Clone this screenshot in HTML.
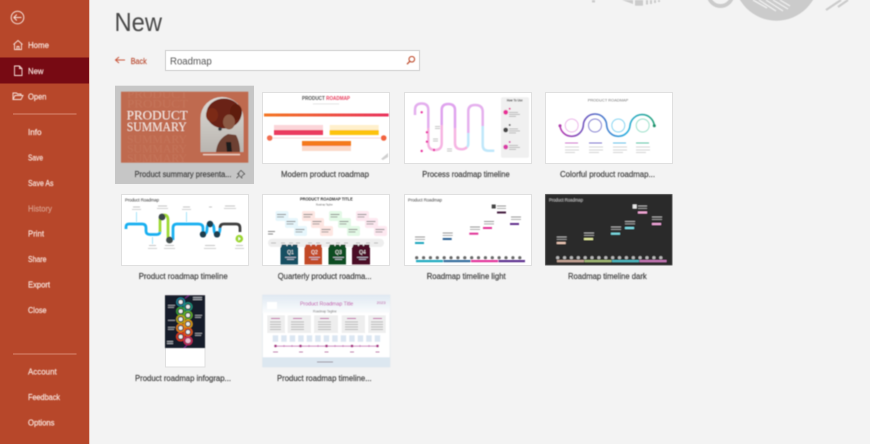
<!DOCTYPE html>
<html>
<head>
<meta charset="utf-8">
<style>
html,body{margin:0;padding:0;width:870px;height:444px;overflow:hidden;background:#f3f3f3}
svg{display:block;position:absolute;left:0;top:0;font-family:"Liberation Sans",sans-serif}
.nav{font-size:8.6px;fill:#f9e6df;stroke:#f9e6df;stroke-width:.18px}
.lb{font-size:8.6px;fill:#444;stroke:#444;stroke-width:.2px}
</style>
</head>
<body>
<svg width="870" height="444" viewBox="0 0 870 444" xmlns="http://www.w3.org/2000/svg">
<defs>
<filter id="b" x="-5%" y="-5%" width="110%" height="110%"><feGaussianBlur stdDeviation=".45"/></filter>
<filter id="b2" x="-5%" y="-5%" width="110%" height="110%"><feGaussianBlur stdDeviation=".55"/></filter>
<clipPath id="c1"><rect x="121" y="91.700" width="127.300" height="71"/></clipPath>
<linearGradient id="g2"><stop offset="0" stop-color="#f47521"/><stop offset="1" stop-color="#e8315c"/></linearGradient>
<linearGradient id="g4"><stop offset="0" stop-color="#b53bb2"/><stop offset=".35" stop-color="#5a63c4"/><stop offset=".7" stop-color="#2eaee0"/><stop offset="1" stop-color="#25a27c"/></linearGradient>
<linearGradient id="g10" x1="0" y1="0" x2="0" y2="1"><stop offset="0" stop-color="#dfe9f2"/><stop offset="1" stop-color="#fbfcfd"/></linearGradient>
<linearGradient id="arch" x1="0" y1="0" x2="0" y2="1"><stop offset="0" stop-color="#dcd9d4"/><stop offset="1" stop-color="#b9b5b0"/></linearGradient>
</defs>
<rect width="870" height="444" fill="#f3f3f3"/>

<!-- decorative top right -->
<g fill="#cbcbcb" filter="url(#b)">
<circle cx="776.500" cy="-21.800" r="42.500"/>
<g stroke="#f0f0f0" stroke-width="1.300" fill="none"><path d="M753 0l14 8M759 0l17 11M766 0l17 11M773 0l15 9M780 0l10 6"/></g>
<circle cx="720.500" cy="-6" r="12" fill="none" stroke="#cbcbcb" stroke-width="4"/>
<path d="M622 0L633 4V0Z"/>
<rect x="635" y="0" width="8" height="5.700"/>
<path d="M646 0h2v4.500h-2zM650 0h2v4h-2zM654 0h2v3h-2zM658 0h2v2h-2z"/>
<path d="M592 0h3v2.500h-3z"/>
<path d="M826 10L841 0M838 7L848 0" stroke="#cbcbcb" stroke-width="2.200" fill="none"/>
</g>

<!-- sidebar -->
<rect x="0" y="0" width="89" height="444" fill="#b7472a"/>
<rect x="89" y="0" width="1" height="444" fill="#e8c5ba"/>
<rect x="0" y="57.500" width="89" height="26" fill="#770a13"/>
<g filter="url(#b)">
<circle cx="17.500" cy="17.500" r="6.300" fill="none" stroke="#f7e3dc" stroke-width="1"/>
<path d="M21.500 17.500H14M16.800 14.500L13.800 17.500L16.800 20.500" fill="none" stroke="#f7e3dc" stroke-width="1"/>
<path d="M13.500 44.500L18 40.500L22.500 44.500M14.500 44V49.500H21.500V44M17 49.500V46.500H19V49.500" fill="none" stroke="#f7e3dc" stroke-width=".9"/>
<path d="M14.500 66H19.500L22 68.500V75.500H14.500ZM19.500 66V68.500H22" fill="none" stroke="#f7e3dc" stroke-width=".9"/>
<path d="M13 99.500V93H16.500L17.500 94H21V95.500M13 99.500L15 95.500H23L21 99.500Z" fill="none" stroke="#f7e3dc" stroke-width=".9"/>
<text class="nav" x="28" y="48" textLength="21" lengthAdjust="spacingAndGlyphs">Home</text>
<text class="nav" x="28" y="74" textLength="15.500" lengthAdjust="spacingAndGlyphs">New</text>
<text class="nav" x="28" y="99.500" textLength="18.500" lengthAdjust="spacingAndGlyphs">Open</text>
<text class="nav" x="28" y="135" textLength="13.500" lengthAdjust="spacingAndGlyphs">Info</text>
<text class="nav" x="28" y="160.500" textLength="15" lengthAdjust="spacingAndGlyphs">Save</text>
<text class="nav" x="28" y="186" textLength="25.500" lengthAdjust="spacingAndGlyphs">Save As</text>
<text class="nav" x="28" y="211.500" textLength="24" lengthAdjust="spacingAndGlyphs" style="fill:#d9a08e;stroke:#d9a08e">History</text>
<text class="nav" x="28" y="236.500" textLength="16" lengthAdjust="spacingAndGlyphs">Print</text>
<text class="nav" x="28" y="262" textLength="18.500" lengthAdjust="spacingAndGlyphs">Share</text>
<text class="nav" x="28" y="287.500" textLength="22" lengthAdjust="spacingAndGlyphs">Export</text>
<text class="nav" x="28" y="313" textLength="18.500" lengthAdjust="spacingAndGlyphs">Close</text>
<text class="nav" x="28" y="374.500" textLength="28.700" lengthAdjust="spacingAndGlyphs">Account</text>
<text class="nav" x="28" y="400" textLength="32" lengthAdjust="spacingAndGlyphs">Feedback</text>
<text class="nav" x="28" y="425.500" textLength="26.500" lengthAdjust="spacingAndGlyphs">Options</text>
</g>
<rect x="13" y="113.500" width="63.500" height="1" fill="#d98a72"/>
<rect x="13" y="353.500" width="63.500" height="1" fill="#d98a72"/>

<!-- header -->
<g filter="url(#b)">
<text x="114.500" y="31" font-size="26" fill="#4a4a4a" textLength="47.500" lengthAdjust="spacingAndGlyphs">New</text>
<path d="M125 60H116M119 57L115.500 60L119 63" fill="none" stroke="#c9573c" stroke-width="1"/>
<text x="130.700" y="64" font-size="8.400" fill="#bb5138" stroke="#bb5138" stroke-width=".2" textLength="16" lengthAdjust="spacingAndGlyphs">Back</text>
</g>
<rect x="165.500" y="50.500" width="254" height="20" fill="#fff" stroke="#d8d8d8" stroke-width="1.300"/>
<g filter="url(#b)">
<text x="170" y="64.300" font-size="9.700" fill="#555" textLength="41.700" lengthAdjust="spacingAndGlyphs">Roadmap</text>
<circle cx="411.800" cy="59.200" r="2.800" fill="none" stroke="#bf4f30" stroke-width="1.100"/>
<path d="M409.700 61.400L407 64.200" stroke="#bf4f30" stroke-width="1.300"/>
</g>

<!-- selected card -->
<rect x="115" y="85.700" width="139" height="98.300" fill="#c6c6c6"/>

<!-- white/thumb frames -->
<g fill="#fff" stroke="#dfdfdf" stroke-width="1">
<rect x="262.500" y="92.500" width="127" height="71"/>
<rect x="404.500" y="92.500" width="127" height="71"/>
<rect x="545.500" y="92.500" width="127" height="71"/>
<rect x="121.500" y="194.500" width="127" height="71"/>
<rect x="262.500" y="194.500" width="127" height="71"/>
<rect x="404.500" y="194.500" width="127" height="71"/>
<rect x="165.500" y="295.500" width="39.500" height="71.500"/>
</g>

<!-- thumb 1: product summary -->
<g filter="url(#b)">
<rect x="121" y="91.700" width="127.300" height="71" fill="#bf6a4f"/>
<g clip-path="url(#c1)">
<g font-family="Liberation Serif,serif" font-size="12" fill="#c5745a">
<text x="127" y="98" textLength="61" lengthAdjust="spacingAndGlyphs">PRODUCT</text>
<text x="127" y="107.500" textLength="61" lengthAdjust="spacingAndGlyphs">PRODUCT</text>
<text x="127" y="143" textLength="60" lengthAdjust="spacingAndGlyphs">SUMMARY</text>
<text x="127" y="152.500" textLength="60" lengthAdjust="spacingAndGlyphs">SUMMARY</text>
<text x="127" y="162" textLength="60" lengthAdjust="spacingAndGlyphs">SUMMARY</text>
</g>
</g>
<text x="126.700" y="119.300" font-family="Liberation Serif,serif" font-size="12.300" fill="#f6e9e2" textLength="61" lengthAdjust="spacingAndGlyphs">PRODUCT</text>
<text x="126.700" y="131" font-family="Liberation Serif,serif" font-size="12.300" fill="#f6e9e2" textLength="60" lengthAdjust="spacingAndGlyphs">SUMMARY</text>
<path d="M200.500 152V118A21.500 21 0 0 1 243.500 118V152Z" fill="url(#arch)"/>
<path d="M216 152C217 142 222 137 228 134L236 135C239 140 240 147 240 152Z" fill="#6d4030"/>
<ellipse cx="224" cy="113.500" rx="17.500" ry="15" fill="#6a2412"/>
<ellipse cx="212" cy="115" rx="6" ry="7" fill="#7c2b14"/>
<ellipse cx="236" cy="112" rx="6" ry="8" fill="#5e1e0e"/>
<ellipse cx="229" cy="122" rx="6" ry="7.500" fill="#8c5a45"/>
<path d="M226 142l5 0 1 10h-5z" fill="#1d1b1c"/>
<circle cx="220" cy="129" r="1.800" fill="#38383c"/>
<rect x="203" y="154" width="37" height="1.200" fill="#f1d8cc"/>
</g>
<text class="lb" x="134.500" y="177" textLength="97" lengthAdjust="spacingAndGlyphs" filter="url(#b)">Product summary presenta...</text>
<path d="M238 173.500l3-3.200 3.800 3.800-1.100 .3-2 2 .1 1.600-4-4 1.500 .1zM238.800 175.800l-2.300 2.400" fill="none" stroke="#555" stroke-width=".8" filter="url(#b)"/>

<!-- thumb 2: modern -->
<g filter="url(#b)">
<text x="302" y="100" font-size="5.200" font-weight="bold" fill="#555" textLength="48" lengthAdjust="spacingAndGlyphs">PRODUCT <tspan fill="#e8415f">ROADMAP</tspan></text>
<rect x="313" y="103.500" width="26" height=".8" fill="#ddd"/>
<rect x="264" y="113.500" width="124.700" height="3" fill="url(#g2)"/>
<rect x="274" y="125" width="49" height="5" fill="#fbd5d9"/>
<rect x="274" y="130" width="49" height="5" fill="#ea3b5f"/>
<rect x="329.700" y="125" width="49" height="5" fill="#fff0cc"/>
<rect x="329.700" y="130" width="49" height="5" fill="#fdc30a"/>
<rect x="269" y="137.600" width="114" height=".9" fill="#fad8d8"/>
<circle cx="269.700" cy="138" r="2.800" fill="#f26d4f"/>
<circle cx="383.700" cy="138" r="2.800" fill="#f2623e"/>
<rect x="302" y="141" width="49" height="5" fill="#f47a1c"/>
<rect x="302" y="146" width="49" height="5" fill="#fbd9c9"/>
<path d="M381 159l7-6v4l-5 3z" fill="#cfcfcf"/>
</g>
<text class="lb" x="281" y="177" textLength="88" lengthAdjust="spacingAndGlyphs" filter="url(#b)">Modern product roadmap</text>

<!-- thumb 3: process -->
<g filter="url(#b)" fill="none">
<path d="M415 115V110Q415 103.500 421.700 103.500Q428.300 103.500 428.300 110V128" stroke="#e3aeee" stroke-width="2.500"/>
<path d="M428.300 128V143.300Q428.300 150 435 150Q441.700 150 441.700 143.300V125" stroke="#f6b4e2" stroke-width="2.500"/>
<path d="M441.700 125V110Q441.700 104 448.300 104Q455 104 455 110V128" stroke="#dfa3ee" stroke-width="2.500"/>
<path d="M455 128V143.300Q455 149.300 461.700 149.300Q465 149.300 467 147" stroke="#f6b4e2" stroke-width="2.500"/>
<path d="M467 147Q468.300 146 468.300 143.300V133" stroke="#bfe7fa" stroke-width="2.500"/>
<path d="M468.300 133V111Q468.300 105 475 105Q482.700 105 482.700 111.700V126" stroke="#e5b0ee" stroke-width="2.500"/>
<path d="M482.700 126V145Q482.700 150.700 488.300 150.700H494.300" stroke="#bfe7fa" stroke-width="2.500"/>
<g fill="#e7329e" stroke="none">
<circle cx="421.700" cy="112.300" r="1.200"/><circle cx="427" cy="132.300" r="1.200"/><circle cx="427" cy="141.700" r="1.200"/><circle cx="421.700" cy="151" r="1.200"/><circle cx="434" cy="150" r="1.200"/>
</g>
<g stroke="#b5b5b5" stroke-width=".7"><path d="M435 126.500h5M435 128.500h5M433 139h5M433 141h5M447 149h5M447 151h5"/></g>
<rect x="501" y="97.300" width="28" height="60.400" rx="2" fill="#f0f0f0" stroke="none"/>
<text x="506.700" y="101.500" font-size="3.200" font-weight="bold" fill="#444" stroke="none" textLength="16" lengthAdjust="spacingAndGlyphs">How To Use</text>
<g stroke="none">
<circle cx="505.700" cy="112.300" r="2.400" fill="#e72f98"/><circle cx="505.700" cy="130" r="2.400" fill="#444"/><circle cx="505.700" cy="147" r="2.400" fill="#d93aa8"/>
<circle cx="509.700" cy="108.700" r="1" fill="#e72f98"/><circle cx="509.700" cy="125" r="1" fill="#555"/><circle cx="509.700" cy="142" r="1" fill="#d93aa8"/>
<path d="M509 112h9v.8h-9zM509 114h11v.8h-11zM509 116h7v.8h-7zM509 128.500h9v.8h-9zM509 130.500h11v.8h-11zM509 132.500h7v.8h-7zM509 145h9v.8h-9zM509 147h11v.8h-11zM509 149h7v.8h-7z" fill="#a5a5a5"/>
</g>
</g>
<text class="lb" x="422.300" y="177" textLength="87.400" lengthAdjust="spacingAndGlyphs" filter="url(#b)">Process roadmap timeline</text>

<!-- thumb 4: colorful -->
<g filter="url(#b)" fill="none">
<text x="587.700" y="101.500" font-size="4" fill="#777" stroke="none" textLength="40.600" lengthAdjust="spacingAndGlyphs">PRODUCT ROADMAP</text>
<path d="M560 125.700A11.700 11.700 0 0 0 583.300 125.700A11.700 11.700 0 0 1 606.700 125.700A11.700 11.700 0 0 0 630 125.700A12.200 12.200 0 0 1 654.300 125.700" stroke="url(#g4)" stroke-width="1.600"/>
<circle cx="560" cy="125.700" r="1.500" fill="#ae3cab" stroke="none"/><circle cx="654.300" cy="125.700" r="1.500" fill="#1e8f69" stroke="none"/>
<circle cx="571.700" cy="125.500" r="6.500" stroke="#ecb8ea" stroke-width="1"/>
<circle cx="595" cy="125.500" r="6.500" stroke="#8a87d2" stroke-width="1"/>
<circle cx="618.300" cy="125.500" r="6.500" stroke="#8ad6f2" stroke-width="1"/>
<circle cx="642.700" cy="125.500" r="6.500" stroke="#9de0ca" stroke-width="1"/>
<g stroke="none">
<rect x="565" y="142.500" width="13" height="1" fill="#cf7acd"/><rect x="589" y="142.500" width="13" height="1" fill="#7f76cc"/><rect x="613" y="142.500" width="13" height="1" fill="#66c0e8"/><rect x="636" y="142.500" width="13" height="1" fill="#60c3a4"/>
<g fill="#d5d5d5"><rect x="565" y="146.500" width="14" height="1"/><rect x="565" y="149.500" width="14" height="1"/><rect x="565" y="152" width="10" height="1"/><rect x="589" y="146.500" width="14" height="1"/><rect x="589" y="149.500" width="14" height="1"/><rect x="589" y="152" width="10" height="1"/><rect x="613" y="146.500" width="14" height="1"/><rect x="613" y="149.500" width="14" height="1"/><rect x="613" y="152" width="10" height="1"/><rect x="636" y="146.500" width="14" height="1"/><rect x="636" y="149.500" width="14" height="1"/><rect x="636" y="152" width="10" height="1"/></g>
</g>
</g>
<text class="lb" x="560" y="177" textLength="95" lengthAdjust="spacingAndGlyphs" filter="url(#b)">Colorful product roadmap...</text>

<!-- thumb 5: timeline -->
<g filter="url(#b)" fill="none">
<text x="125" y="201.500" font-size="4.800" fill="#555" stroke="#555" stroke-width=".1" textLength="34" lengthAdjust="spacingAndGlyphs">Product Roadmap</text>
<g stroke="#8fdcf8" stroke-width=".8"><path d="M136.500 212V222M152.500 237V244M186.500 212V222"/></g>
<path d="M126 229V227Q126 224 129 224H142Q146 224 146 228V231Q146 234.500 150 234.500H157Q160 234.500 160 231" stroke="#14aef0" stroke-width="2.700"/>
<path d="M160 232V220Q160 215 164 215Q168 215 168 220V236Q168 240 169.500 240" stroke="#9dd832" stroke-width="2.700"/>
<path d="M173 240V228Q173 224 177 224H198Q203 224 203 228V234Q207 234 207 229Q207 224 210 224Q214 224 214 229Q214 234 217 234Q220 234 220 228" stroke="#14aef0" stroke-width="2.700"/>
<path d="M220 228Q220 224 224 224H236Q240 224 240 228V232" stroke="#3c3c3c" stroke-width="2.700"/>
<g stroke="none">
<circle cx="162" cy="217" r="3.400" fill="#3a4648"/><circle cx="169.500" cy="240" r="3.400" fill="#3f4b4b"/>
<circle cx="203" cy="234.300" r="3.200" fill="#1c3c4d"/><circle cx="210" cy="224" r="3.200" fill="#1c3c4d"/><circle cx="217" cy="234.300" r="3.200" fill="#1c3c4d"/>
<circle cx="239.300" cy="238.700" r="3.800" fill="#9bd62d"/>
<path d="M238.300 236.700l2.500 2-2.500 2z" fill="#fff"/>
<g fill="#c5c5c5">
<rect x="133" y="206.500" width="7" height="1"/><rect x="132" y="209" width="9" height=".8"/>
<rect x="158" y="205.500" width="9" height="1"/><rect x="157" y="208" width="11" height=".8"/>
<rect x="183" y="206.500" width="7" height="1"/><rect x="182" y="209" width="9" height=".8"/>
<rect x="209" y="206.500" width="3" height="1"/>
<rect x="225" y="205.500" width="10" height="1"/><rect x="224" y="208" width="12" height=".8"/>
<rect x="149" y="245" width="7" height="1"/><rect x="148" y="248" width="9" height=".8"/>
<rect x="165" y="245" width="9" height="1"/><rect x="164" y="248" width="11" height=".8"/>
<rect x="205" y="245" width="10" height="1"/><rect x="204" y="248" width="12" height=".8"/>
<rect x="236" y="245" width="7" height="1"/><rect x="235" y="248" width="9" height=".8"/>
</g>
</g>
</g>
<text class="lb" x="138.700" y="279" textLength="89" lengthAdjust="spacingAndGlyphs" filter="url(#b)">Product roadmap timeline</text>

<!-- thumb 6: quarterly -->
<g filter="url(#b)">
<text x="300" y="200.700" font-size="4.600" font-weight="bold" fill="#333" textLength="52.700" lengthAdjust="spacingAndGlyphs">PRODUCT ROADMAP TITLE</text>
<text x="316" y="205.500" font-size="3" fill="#666" textLength="16.700" lengthAdjust="spacingAndGlyphs">Roadmap Tagline</text>
<g fill="#e6f6fc">
<rect x="275.500" y="211" width="13" height="10" rx="2"/><rect x="285" y="218" width="13" height="10" rx="2"/><rect x="294" y="226" width="13" height="10" rx="2"/>
</g>
<g fill="#fde6e2">
<rect x="302" y="211" width="13" height="10" rx="2"/><rect x="311" y="218" width="13" height="10" rx="2"/><rect x="320" y="226" width="13" height="10" rx="2"/>
</g>
<g fill="#e3f9e6">
<rect x="329" y="211" width="13" height="10" rx="2"/><rect x="338" y="218" width="13" height="10" rx="2"/><rect x="347" y="226" width="13" height="10" rx="2"/>
</g>
<g fill="#fde8f0">
<rect x="356" y="211" width="13" height="10" rx="2"/><rect x="365" y="218" width="13" height="10" rx="2"/><rect x="374" y="226" width="13" height="10" rx="2"/>
</g>
<g fill="#888">
<rect x="277" y="214" width="9" height="1"/><rect x="277" y="216.500" width="7" height=".8"/><rect x="286.500" y="221" width="9" height="1"/><rect x="286.500" y="223.500" width="7" height=".8"/><rect x="295.500" y="229" width="9" height="1"/><rect x="295.500" y="231.500" width="7" height=".8"/>
<rect x="303.500" y="214" width="9" height="1"/><rect x="303.500" y="216.500" width="7" height=".8"/><rect x="312.500" y="221" width="9" height="1"/><rect x="312.500" y="223.500" width="7" height=".8"/><rect x="321.500" y="229" width="9" height="1"/><rect x="321.500" y="231.500" width="7" height=".8"/>
<rect x="330.500" y="214" width="9" height="1"/><rect x="330.500" y="216.500" width="7" height=".8"/><rect x="339.500" y="221" width="9" height="1"/><rect x="339.500" y="223.500" width="7" height=".8"/><rect x="348.500" y="229" width="9" height="1"/><rect x="348.500" y="231.500" width="7" height=".8"/>
<rect x="357.500" y="214" width="9" height="1"/><rect x="357.500" y="216.500" width="7" height=".8"/><rect x="366.500" y="221" width="9" height="1"/><rect x="366.500" y="223.500" width="7" height=".8"/><rect x="375.500" y="229" width="9" height="1"/><rect x="375.500" y="231.500" width="7" height=".8"/>
<rect x="268" y="231" width="7" height="1"/><rect x="268" y="233.500" width="5" height="1"/>
</g>
<rect x="268" y="238.700" width="116" height="8.300" rx="4" fill="#eee"/>
<path d="M271 243h5M281 243h4M289 243h4M296 243h4M308 243h4M316 243h4M326 243h4M336 243h4M344 243h4M356 243h4M366 243h4M374 243h4" stroke="#aaa" stroke-width=".8"/>
<path d="M282 244.500h4l1 2 1-2h3l1 2 1-2h4.500v2.500l.5 1v16.500h-17.500V248l.5-1z" fill="#144f62"/>
<path d="M306 244.500h4l1 2 1-2h3l1 2 1-2h4.500v2.500l.5 1v16.500h-17.500V248l.5-1z" fill="#c24a26"/>
<path d="M330 244.500h4l1 2 1-2h3l1 2 1-2h4.500v2.500l.5 1v16.500h-17.500V248l.5-1z" fill="#0d4e20"/>
<path d="M353.500 244.500h4l1 2 1-2h3l1 2 1-2h5v2.500l.5 1v16.500h-18V248l.5-1z" fill="#4b0f28"/>
<g fill="#fff" font-size="5" text-anchor="middle"><text x="290.500" y="254">Q1</text><text x="314.500" y="254">Q2</text><text x="338.500" y="254">Q3</text><text x="362.500" y="254">Q4</text></g>
<g fill="#ccd"><rect x="285" y="257" width="11" height=".8"/><rect x="309" y="257" width="11" height=".8"/><rect x="333" y="257" width="11" height=".8"/><rect x="357" y="257" width="11" height=".8"/><rect x="287" y="259" width="7" height=".8"/><rect x="311" y="259" width="7" height=".8"/><rect x="335" y="259" width="7" height=".8"/><rect x="359" y="259" width="7" height=".8"/></g>
</g>
<text class="lb" x="277.700" y="279" textLength="94" lengthAdjust="spacingAndGlyphs" filter="url(#b)">Quarterly product roadma...</text>

<!-- thumb 7: light -->
<g filter="url(#b)">
<text x="408" y="201.500" font-size="4.500" fill="#666" stroke="#666" stroke-width=".1" textLength="34" lengthAdjust="spacingAndGlyphs">Product Roadmap</text>
<g fill="#999">
<rect x="415" y="236.500" width="10" height="1"/><rect x="415" y="239" width="10" height=".8"/>
<rect x="442.700" y="232.500" width="10" height="1"/><rect x="442.700" y="235" width="10" height=".8"/>
<rect x="470" y="226.500" width="10" height="1"/><rect x="470" y="229" width="10" height=".8"/>
<rect x="484" y="221" width="10" height="1"/><rect x="484" y="223.500" width="10" height=".8"/>
<rect x="511" y="216.500" width="10" height="1"/><rect x="511" y="219" width="10" height=".8"/>
<rect x="497" y="205.500" width="9" height="1"/><rect x="497" y="208" width="9" height=".8"/>
</g>
<rect x="491.700" y="204.500" width="4" height="4" fill="#444"/>
<rect x="415" y="242" width="9" height="2" fill="#1aa6bd"/>
<rect x="442.700" y="238" width="9" height="2" fill="#2c5f92"/>
<rect x="469.300" y="232.700" width="9" height="2" fill="#e03397"/>
<rect x="483" y="227" width="9" height="2" fill="#e33296"/>
<rect x="510" y="223" width="9" height="2" fill="#622f8d"/>
<rect x="497" y="211.500" width="9" height="2" fill="#451a3f"/>
<g fill="#666"><circle cx="416.700" cy="257.700" r="1.600"/><circle cx="423.600" cy="257.700" r="1.600"/><circle cx="430.400" cy="257.700" r="1.600"/><circle cx="437.300" cy="257.700" r="1.600"/><circle cx="444.200" cy="257.700" r="1.600"/><circle cx="451" cy="257.700" r="1.600"/><circle cx="457.900" cy="257.700" r="1.600"/><circle cx="464.800" cy="257.700" r="1.600"/><circle cx="471.700" cy="257.700" r="1.600"/><circle cx="478.500" cy="257.700" r="1.600"/><circle cx="485.400" cy="257.700" r="1.600"/><circle cx="492.300" cy="257.700" r="1.600"/><circle cx="499.100" cy="257.700" r="1.600"/><circle cx="506" cy="257.700" r="1.600"/><circle cx="512.900" cy="257.700" r="1.600"/><circle cx="519.800" cy="257.700" r="1.600"/></g>
<rect x="416" y="260" width="27" height="2.200" fill="#1fa9bf"/>
<rect x="443.500" y="260" width="27" height="2.200" fill="#336a9c"/>
<rect x="471" y="260" width="27" height="2.200" fill="#e2319a"/>
<rect x="498.500" y="260" width="26.500" height="2.200" fill="#5b2e8e"/>
</g>
<text class="lb" x="426.700" y="279" textLength="79" lengthAdjust="spacingAndGlyphs" filter="url(#b)">Roadmap timeline light</text>

<!-- thumb 8: dark -->
<rect x="545" y="194" width="127.500" height="71.500" fill="#8a8a8a"/>
<g filter="url(#b)">
<rect x="545.500" y="194.500" width="126.500" height="70.500" fill="#2c2c2c"/>
<text x="549" y="201.500" font-size="4.500" fill="#b5b5b5" stroke="#b5b5b5" stroke-width=".1" textLength="34" lengthAdjust="spacingAndGlyphs">Product Roadmap</text>
<g fill="#aaa">
<rect x="556.700" y="236.500" width="10" height="1"/><rect x="556.700" y="239" width="10" height=".8"/>
<rect x="584" y="232.500" width="10" height="1"/><rect x="584" y="235" width="10" height=".8"/>
<rect x="611" y="226.500" width="10" height="1"/><rect x="611" y="229" width="10" height=".8"/>
<rect x="625" y="221" width="10" height="1"/><rect x="625" y="223.500" width="10" height=".8"/>
<rect x="652" y="216.500" width="10" height="1"/><rect x="652" y="219" width="10" height=".8"/>
<rect x="638" y="205.500" width="9" height="1"/><rect x="638" y="208" width="9" height=".8"/>
</g>
<rect x="632.700" y="204.500" width="4" height="4" fill="#e8e8e8"/>
<rect x="556.700" y="242" width="9" height="2" fill="#ecc7b5"/>
<rect x="584" y="238" width="9" height="2" fill="#e4eda0"/>
<rect x="611" y="232.700" width="9" height="2" fill="#7ee1e8"/>
<rect x="625" y="227" width="9" height="2" fill="#7ee1e8"/>
<rect x="652" y="223" width="9" height="2" fill="#f0a6da"/>
<rect x="638" y="211.500" width="9" height="2" fill="#f4a9d8"/>
<g fill="#bbb"><circle cx="557.700" cy="257.700" r="1.600"/><circle cx="564.600" cy="257.700" r="1.600"/><circle cx="571.400" cy="257.700" r="1.600"/><circle cx="578.300" cy="257.700" r="1.600"/><circle cx="585.200" cy="257.700" r="1.600"/><circle cx="592" cy="257.700" r="1.600"/><circle cx="598.900" cy="257.700" r="1.600"/><circle cx="605.800" cy="257.700" r="1.600"/><circle cx="612.700" cy="257.700" r="1.600"/><circle cx="619.500" cy="257.700" r="1.600"/><circle cx="626.400" cy="257.700" r="1.600"/><circle cx="633.300" cy="257.700" r="1.600"/><circle cx="640.100" cy="257.700" r="1.600"/><circle cx="647" cy="257.700" r="1.600"/><circle cx="653.900" cy="257.700" r="1.600"/><circle cx="660.800" cy="257.700" r="1.600"/></g>
<rect x="557" y="260" width="27" height="2.200" fill="#c9a797"/>
<rect x="584.500" y="260" width="27" height="2.200" fill="#a4bd76"/>
<rect x="612" y="260" width="27" height="2.200" fill="#4dbcc4"/>
<rect x="639.500" y="260" width="27" height="2.200" fill="#c878b8"/>
</g>
<text class="lb" x="568" y="279" textLength="78.700" lengthAdjust="spacingAndGlyphs" filter="url(#b)">Roadmap timeline dark</text>

<!-- thumb 9: infographic -->
<g filter="url(#b)">
<rect x="165" y="295.300" width="40" height="52.700" fill="#171d2a"/>
<g fill="none" stroke-width="1.600">
<circle cx="180.700" cy="302" r="3.800" stroke="#1e7f92"/><circle cx="188" cy="306.700" r="3.800" stroke="#1c8b7a"/>
<circle cx="180.700" cy="311.300" r="3.800" stroke="#3a9b35"/><circle cx="188" cy="315.300" r="3.800" stroke="#62ab2c"/>
<circle cx="180.700" cy="319.300" r="3.800" stroke="#b7a51d"/><circle cx="188" cy="324" r="3.800" stroke="#d89a18"/>
<circle cx="180.700" cy="328" r="3.800" stroke="#e27f1a"/><circle cx="188" cy="332" r="3.800" stroke="#e3581f"/>
<circle cx="180.700" cy="336.700" r="3.800" stroke="#dc3b22"/><circle cx="188" cy="340.700" r="3.800" stroke="#c52a5a"/>
</g>
<g fill="#eee"><circle cx="180.700" cy="302" r="2"/><circle cx="188" cy="306.700" r="2"/><circle cx="180.700" cy="311.300" r="2"/><circle cx="188" cy="315.300" r="2"/><circle cx="180.700" cy="319.300" r="2"/><circle cx="188" cy="324" r="2"/><circle cx="180.700" cy="328" r="2"/><circle cx="188" cy="332" r="2"/><circle cx="180.700" cy="336.700" r="2"/><circle cx="188" cy="340.700" r="2.600" fill="#f2bcd0"/></g>
<path d="M184 348l3-3M189 295.300l-4 3" stroke="#8d2a9a" stroke-width=".8"/>
<g fill="#a9adb5">
<rect x="193" y="297" width="9" height="1"/><rect x="193" y="299" width="9" height="1"/>
<rect x="168" y="305" width="7" height=".8"/><rect x="168" y="307" width="6" height=".8"/>
<rect x="195" y="315" width="7" height=".8"/><rect x="195" y="317" width="6" height=".8"/>
<rect x="168" y="320" width="7" height=".8"/>
<rect x="168" y="327" width="7" height=".8"/><rect x="168" y="329" width="6" height=".8"/>
<rect x="195" y="333" width="7" height=".8"/><rect x="195" y="335" width="6" height=".8"/>
<rect x="167" y="341" width="6" height="1"/><rect x="167" y="343" width="6" height="1"/>
</g>
</g>
<text class="lb" x="135" y="381" textLength="96" lengthAdjust="spacingAndGlyphs" filter="url(#b)">Product roadmap infograp...</text>

<!-- thumb 10: timeline2 -->
<g filter="url(#b)">
<rect x="262.500" y="295" width="127.500" height="72" fill="#fff" stroke="#dfe6ec" stroke-width=".6"/>
<rect x="262.500" y="295" width="127.500" height="18" fill="url(#g10)"/>
<rect x="262.500" y="357.300" width="127.500" height="9.700" fill="#dce7f0"/>
<text x="300" y="305.500" font-size="5.600" fill="#bf3fa5" textLength="53.300" lengthAdjust="spacingAndGlyphs">Product Roadmap Title</text>
<text x="313" y="312.500" font-size="3.500" fill="#777" textLength="23.700" lengthAdjust="spacingAndGlyphs">Roadmap Tagline</text>
<text x="376.700" y="304" font-size="3.200" fill="#b8479f" textLength="9" lengthAdjust="spacingAndGlyphs">2023</text>
<rect x="267" y="302" width="10" height="7" fill="#fff"/>
<g fill="#eeeeee"><rect x="267.300" y="315.300" width="17.700" height="17.700"/><rect x="287.700" y="315.300" width="23.300" height="17.700"/><rect x="314" y="315.300" width="24" height="17.700"/><rect x="341.700" y="315.300" width="23.300" height="17.700"/><rect x="368.300" y="315.300" width="17.400" height="17.700"/></g>
<g fill="#b8479f"><rect x="271" y="318" width="9" height=".9"/><rect x="293" y="318" width="9" height=".9"/><rect x="320" y="318" width="9" height=".9"/><rect x="347" y="318" width="9" height=".9"/><rect x="373" y="318" width="9" height=".9"/></g>
<g fill="#aaa"><rect x="270" y="321.500" width="11" height=".8"/><rect x="270" y="324" width="11" height=".8"/><rect x="270" y="326.500" width="11" height=".8"/><rect x="270" y="329" width="11" height=".8"/><rect x="291" y="321.500" width="13" height=".8"/><rect x="291" y="324" width="13" height=".8"/><rect x="291" y="326.500" width="13" height=".8"/><rect x="291" y="329" width="13" height=".8"/><rect x="318" y="321.500" width="13" height=".8"/><rect x="318" y="324" width="13" height=".8"/><rect x="318" y="326.500" width="13" height=".8"/><rect x="318" y="329" width="13" height=".8"/><rect x="345" y="321.500" width="13" height=".8"/><rect x="345" y="324" width="13" height=".8"/><rect x="345" y="326.500" width="13" height=".8"/><rect x="345" y="329" width="13" height=".8"/><rect x="371" y="321.500" width="12" height=".8"/><rect x="371" y="324" width="12" height=".8"/><rect x="371" y="326.500" width="12" height=".8"/><rect x="371" y="329" width="12" height=".8"/></g>
<g fill="#dbe6f2"><rect x="272.700" y="335.300" width="5.500" height="6.500"/><rect x="281.200" y="335.300" width="5.500" height="6.500"/><rect x="289.700" y="335.300" width="5.500" height="6.500"/><rect x="298.200" y="335.300" width="5.500" height="6.500"/><rect x="306.700" y="335.300" width="5.500" height="6.500"/><rect x="315.200" y="335.300" width="5.500" height="6.500"/><rect x="323.700" y="335.300" width="5.500" height="6.500"/><rect x="332.200" y="335.300" width="5.500" height="6.500"/><rect x="340.700" y="335.300" width="5.500" height="6.500"/><rect x="349.200" y="335.300" width="5.500" height="6.500"/><rect x="357.700" y="335.300" width="5.500" height="6.500"/><rect x="366.200" y="335.300" width="5.500" height="6.500"/><rect x="374.700" y="335.300" width="5.500" height="6.500"/></g>
<rect x="275" y="345.700" width="103" height=".9" fill="#c66bb5"/>
<g fill="#a61a80"><circle cx="275.500" cy="346" r="1.400"/><circle cx="300.500" cy="346" r="1.400"/><circle cx="326.500" cy="346" r="1.400"/><circle cx="352" cy="346" r="1.400"/><circle cx="377.500" cy="346" r="1.400"/></g>
<g fill="#c56ab6"><circle cx="284" cy="346" r=".9"/><circle cx="292" cy="346" r=".9"/><circle cx="309" cy="346" r=".9"/><circle cx="318" cy="346" r=".9"/><circle cx="335" cy="346" r=".9"/><circle cx="343" cy="346" r=".9"/><circle cx="360" cy="346" r=".9"/><circle cx="369" cy="346" r=".9"/></g>
<g fill="#b8479f"><rect x="273" y="351.500" width="5" height="1"/><rect x="299" y="351.500" width="4" height="1"/><rect x="324.500" y="351.500" width="4" height="1"/><rect x="350" y="351.500" width="4" height="1"/><rect x="375.500" y="351.500" width="4" height="1"/></g>
<rect x="317" y="361.500" width="16" height="1" fill="#9a8f9d"/>
</g>
<text class="lb" x="277" y="381" textLength="94.700" lengthAdjust="spacingAndGlyphs" filter="url(#b)">Product roadmap timeline...</text>
</svg>
</body>
</html>
